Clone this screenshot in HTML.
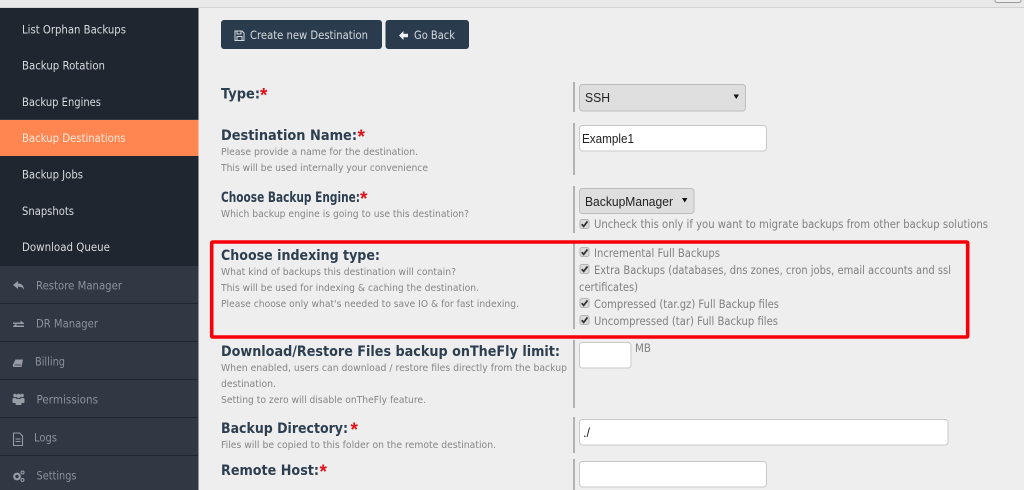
<!DOCTYPE html>
<html><head><meta charset="utf-8"><style>
html,body{margin:0;padding:0;background:#eee;width:1024px;height:490px;overflow:hidden}
svg{display:block;filter:blur(.3px)}
text{font-family:"DejaVu Sans","Liberation Sans",sans-serif}
.n{font-size:11.3px;fill:#d8dadc}
.a{font-size:11.3px;fill:#ffe8dc}
.m{font-size:11.3px;fill:#8b929a}
.b{font-size:11.3px;fill:#d5d9dd}
.h{font-size:14.5px;font-weight:bold;fill:#2c3e50}
.s{font-size:10px;fill:#858585}
.c{font-size:11.3px;fill:#808080}
.f{font-family:"Liberation Sans",sans-serif;font-size:12.5px;fill:#222}
.st{font-family:"Liberation Sans",sans-serif;font-size:19px;font-weight:bold;fill:#e0101a}
</style></head><body>
<svg width="1024" height="490" viewBox="0 0 1024 490" xmlns="http://www.w3.org/2000/svg">
<defs>
<g id="cb"><rect x=".5" y=".5" width="9" height="9" rx="2" fill="#dcdcdc" stroke="#b5b5b5"/><path d="M2.200 5.200 4.200 7.400 8 2.400" fill="none" stroke="#333" stroke-width="1.800"/></g>
</defs>
<rect width="1024" height="490" fill="#eeeeee"/>
<rect width="1024" height="7" fill="#e9e9e9"/>
<rect y="7" width="1024" height="1" fill="#d4d4d4"/>
<rect x="995" y="-6" width="26" height="8.500" rx="2" fill="#eee" stroke="#999"/>

<!-- sidebar -->
<rect y="8" width="198.500" height="482" fill="#1f2630"/>
<rect y="119" width="198.500" height="1" fill="#333a44"/>
<rect y="120" width="198.500" height="36" fill="#ff8650"/>
<rect y="266" width="198.500" height="224" fill="#2f3843"/>
<rect y="303" width="198.500" height="1" fill="#1f2630"/>
<rect y="341" width="198.500" height="1" fill="#1f2630"/>
<rect y="379" width="198.500" height="1" fill="#1f2630"/>
<rect y="417" width="198.500" height="1" fill="#1f2630"/>
<rect y="455" width="198.500" height="1" fill="#1f2630"/>
<text class="n" x="22" y="33.500" textLength="104" lengthAdjust="spacingAndGlyphs">List Orphan Backups</text>
<text class="n" x="22" y="69.500" textLength="83" lengthAdjust="spacingAndGlyphs">Backup Rotation</text>
<text class="n" x="22" y="106" textLength="79" lengthAdjust="spacingAndGlyphs">Backup Engines</text>
<text class="a" x="22" y="142" textLength="103.500" lengthAdjust="spacingAndGlyphs">Backup Destinations</text>
<text class="n" x="22" y="178.500" textLength="61" lengthAdjust="spacingAndGlyphs">Backup Jobs</text>
<text class="n" x="22" y="215" textLength="52" lengthAdjust="spacingAndGlyphs">Snapshots</text>
<text class="n" x="22" y="251" textLength="88" lengthAdjust="spacingAndGlyphs">Download Queue</text>
<text class="m" x="36" y="289.500" textLength="86" lengthAdjust="spacingAndGlyphs">Restore Manager</text>
<text class="m" x="36" y="327.500" textLength="62" lengthAdjust="spacingAndGlyphs">DR Manager</text>
<text class="m" x="35" y="365.500" textLength="30" lengthAdjust="spacingAndGlyphs">Billing</text>
<text class="m" x="36.500" y="403.500" textLength="61.500" lengthAdjust="spacingAndGlyphs">Permissions</text>
<text class="m" x="34" y="441.500" textLength="23" lengthAdjust="spacingAndGlyphs">Logs</text>
<text class="m" x="36.500" y="479.500" textLength="40" lengthAdjust="spacingAndGlyphs">Settings</text>

<!-- sidebar icons -->
<path d="M13 285 18 281v2.500c3.500 0 6 2 6 6.500-1-2.500-3-3.200-6-3.200V289Z" fill="#979da4"/>
<path d="M13 322h7.500v-2l3.500 2.800v.7H13ZM24 325h-7.500v-2L13 325.800v.7H24Z" fill="#979da4" transform="translate(0 .5)"/>
<path d="M15.500 359.500h7.500l-1.500 7.500h-7.500c-1.500 0-1.500-2.500-.5-3.500Z" fill="#979da4"/>
<path d="M14.500 365h6.500" stroke="#2f3843" stroke-width=".8"/>
<g fill="#979da4"><circle cx="15" cy="395.500" r="1.800"/><circle cx="22" cy="395.500" r="1.800"/><circle cx="18.500" cy="396" r="2.200"/><rect x="12.500" y="398" width="4" height="5" rx="1"/><rect x="20.500" y="398" width="4" height="5" rx="1"/><rect x="15.500" y="399" width="6" height="6" rx="1"/></g>
<path d="M13.500 433h6l3 3v9.500h-9ZM15.500 439h5M15.500 441.500h5" fill="none" stroke="#979da4" stroke-width="1.100"/>
<circle cx="17" cy="476.500" r="2.800" fill="none" stroke="#979da4" stroke-width="2.200"/><circle cx="22.500" cy="472.500" r="1.500" fill="none" stroke="#979da4" stroke-width="1.100"/><circle cx="22.500" cy="480" r="1.500" fill="none" stroke="#979da4" stroke-width="1.100"/>

<!-- buttons -->
<rect x="221" y="20" width="161" height="29" rx="3" fill="#2a3b4d"/>
<rect x="385.500" y="20" width="83.500" height="29" rx="3" fill="#2a3b4d"/>
<path d="M235 31h7l2 2v7.500h-9ZM237 31v3h4v-3M237 40v-3.500h5V40" fill="none" stroke="#d5dade" stroke-width="1"/>
<text class="b" x="250" y="39" textLength="118" lengthAdjust="spacingAndGlyphs">Create new Destination</text>
<path d="M399 35.500 403.500 31v2.800H408v3.400H403.500V40Z" fill="#eef0f2"/>
<text class="b" x="414" y="39" textLength="41" lengthAdjust="spacingAndGlyphs">Go Back</text>

<!-- left labels -->
<text class="h" x="221" y="98.500" textLength="39" lengthAdjust="spacingAndGlyphs">Type:</text>
<text class="st" x="260" y="101.500">*</text>
<text class="h" x="221" y="140" textLength="136" lengthAdjust="spacingAndGlyphs">Destination Name:</text>
<text class="st" x="357.500" y="143">*</text>
<text class="s" x="221" y="155" textLength="197" lengthAdjust="spacingAndGlyphs">Please provide a name for the destination.</text>
<text class="s" x="221" y="171" textLength="207" lengthAdjust="spacingAndGlyphs">This will be used internally your convenience</text>
<text class="h" x="221" y="202" textLength="139" lengthAdjust="spacingAndGlyphs">Choose Backup Engine:</text>
<text class="st" x="360" y="205">*</text>
<text class="s" x="221" y="217" textLength="248" lengthAdjust="spacingAndGlyphs">Which backup engine is going to use this destination?</text>
<text class="h" x="221" y="260" textLength="159" lengthAdjust="spacingAndGlyphs">Choose indexing type:</text>
<text class="s" x="221" y="275" textLength="235" lengthAdjust="spacingAndGlyphs">What kind of backups this destination will contain?</text>
<text class="s" x="221" y="291" textLength="258" lengthAdjust="spacingAndGlyphs">This will be used for indexing &amp; caching the destination.</text>
<text class="s" x="221" y="307" textLength="298" lengthAdjust="spacingAndGlyphs">Please choose only what's needed to save IO &amp; for fast indexing.</text>
<text class="h" x="221" y="356" textLength="339" lengthAdjust="spacingAndGlyphs">Download/Restore Files backup onTheFly limit:</text>
<text class="s" x="221" y="371" textLength="346" lengthAdjust="spacingAndGlyphs">When enabled, users can download / restore files directly from the backup</text>
<text class="s" x="221" y="387" textLength="55" lengthAdjust="spacingAndGlyphs">destination.</text>
<text class="s" x="221" y="403" textLength="205" lengthAdjust="spacingAndGlyphs">Setting to zero will disable onTheFly feature.</text>
<text class="h" x="221" y="433" textLength="127" lengthAdjust="spacingAndGlyphs">Backup Directory:</text>
<text class="st" x="350.500" y="436">*</text>
<text class="s" x="221" y="448" textLength="275" lengthAdjust="spacingAndGlyphs">Files will be copied to this folder on the remote destination.</text>
<text class="h" x="221" y="475" textLength="98" lengthAdjust="spacingAndGlyphs">Remote Host:</text>
<text class="st" x="319.500" y="478">*</text>

<!-- vertical rules -->
<g fill="#777"><rect x="573.500" y="82" width="1" height="30"/><rect x="573.500" y="123" width="1" height="52"/><rect x="573.500" y="186" width="1" height="47"/><rect x="573.500" y="243" width="1" height="86"/><rect x="573.500" y="340" width="1" height="68"/><rect x="573.500" y="417" width="1" height="36"/><rect x="573.500" y="459" width="1" height="31"/></g>

<!-- controls -->
<rect x="579.500" y="84.500" width="166" height="26.500" rx="3" fill="#dedede" stroke="#bdbdbd"/>
<text class="f" x="585" y="102" textLength="25" lengthAdjust="spacingAndGlyphs">SSH</text>
<path d="M733.500 94.500h5.500l-2.750 4.500Z" fill="#111"/>
<rect x="579.500" y="125.500" width="187" height="25.500" rx="3" fill="#fff" stroke="#c8c8c8"/>
<text class="f" x="582" y="143" textLength="52" lengthAdjust="spacingAndGlyphs">Example1</text>
<rect x="579.500" y="188.500" width="114.500" height="25" rx="3" fill="#dedede" stroke="#bdbdbd"/>
<text class="f" x="585" y="206" textLength="88" lengthAdjust="spacingAndGlyphs">BackupManager</text>
<path d="M682 198h5.500l-2.750 4.500Z" fill="#111"/>
<use href="#cb" x="579.500" y="219"/>
<text class="c" x="594" y="228" textLength="394" lengthAdjust="spacingAndGlyphs">Uncheck this only if you want to migrate backups from other backup solutions</text>
<use href="#cb" x="579.500" y="247"/>
<text class="c" x="594" y="257" textLength="126" lengthAdjust="spacingAndGlyphs">Incremental Full Backups</text>
<use href="#cb" x="579.500" y="264"/>
<text class="c" x="594" y="274" textLength="357" lengthAdjust="spacingAndGlyphs">Extra Backups (databases, dns zones, cron jobs, email accounts and ssl</text>
<text class="c" x="579" y="291" textLength="59" lengthAdjust="spacingAndGlyphs">certificates)</text>
<use href="#cb" x="579.500" y="298"/>
<text class="c" x="594" y="308" textLength="185" lengthAdjust="spacingAndGlyphs">Compressed (tar.gz) Full Backup files</text>
<use href="#cb" x="579.500" y="315"/>
<text class="c" x="594" y="325" textLength="184" lengthAdjust="spacingAndGlyphs">Uncompressed (tar) Full Backup files</text>
<rect x="579.500" y="342.500" width="51.500" height="25.500" rx="3" fill="#fff" stroke="#c8c8c8"/>
<text class="c" x="635" y="352" textLength="16" lengthAdjust="spacingAndGlyphs">MB</text>
<rect x="579.500" y="419.500" width="368.500" height="25.500" rx="3" fill="#fff" stroke="#c8c8c8"/>
<text class="f" x="583" y="437" textLength="7" lengthAdjust="spacingAndGlyphs">./</text>
<rect x="579.500" y="461.500" width="187" height="25.500" rx="3" fill="#fff" stroke="#c8c8c8"/>

<!-- red box -->
<rect x="211.700" y="242" width="756" height="95" rx="1" fill="none" stroke="#f80008" stroke-width="3.600"/>
</svg>
</body></html>
